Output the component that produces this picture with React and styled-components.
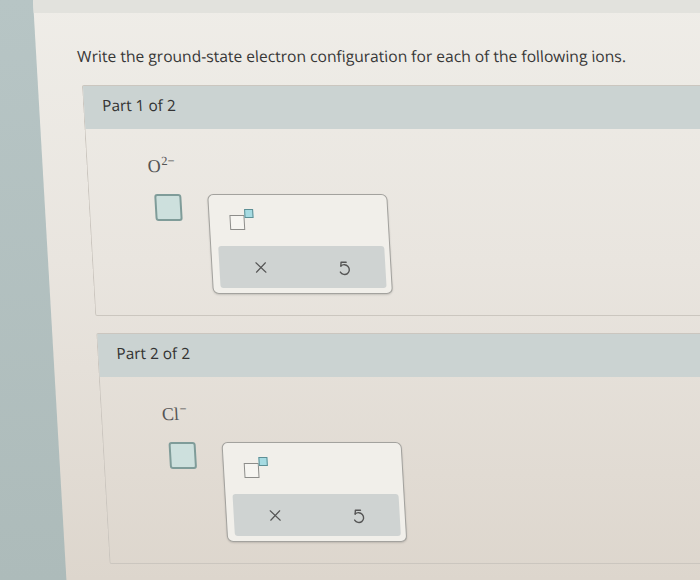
import React from "react";
import styled, { createGlobalStyle } from "styled-components";
import { X } from "lucide-react";

const GlobalStyle = createGlobalStyle`
  html, body {
    margin: 0;
    padding: 0;
  }
  body {
    background: #b2c0c0;
    overflow: hidden;
    font-family: "Open Sans", "Noto Sans", sans-serif;
  }
`;

// wall + monitor, the photo is taken at a slight angle
const Scene = styled.div`
  width: 700px;
  height: 580px;
  overflow: hidden;
  background: linear-gradient(180deg, #b7c5c5 0%, #adbbba 100%);
`;

const Screen = styled.div`
  margin-left: 33px;
  width: 720px;
  height: 580px;
  transform: skewX(3.3deg);
  transform-origin: 0 0;
  background: linear-gradient(180deg, #efede8 0%, #e9e5df 45%, #ddd6cd 100%);
  display: flex;
  flex-direction: column;
`;

const TopBar = styled.div`
  height: 13px;
  flex-shrink: 0;
  background: #e2e2dd;
`;

const Content = styled.div`
  padding: 33px 0 0 41px;
  display: flex;
  flex-direction: column;
`;

const Heading = styled.h1`
  margin: 0 0 18px;
  font-size: 15.6px;
  line-height: 21px;
  font-weight: 400;
  color: #383838;
`;

// =====================================
// question parts

const Card = styled.section`
  margin: 0 0 17px 3px;
  border: 1px solid #cbc6bf;
  border-right: none;
  border-radius: 2px;
`;

const CardHeader = styled.div`
  height: 43px;
  box-sizing: border-box;
  padding: 0 0 4px 18px;
  display: flex;
  align-items: center;
  background: #cbd3d2;
  font-size: 15.4px;
  color: #333;
`;

const CardBody = styled.div`
  padding: 27px 0 21px 60px;
`;

const Species = styled.div`
  font-family: "Liberation Serif", "Times New Roman", serif;
  font-size: 18px;
  line-height: 20px;
  color: #555;
`;

const Sup = styled.sup`
  font-size: 12.5px;
  vertical-align: 0;
  position: relative;
  top: -7px;
  margin-left: 1px;
`;

const Row = styled.div`
  margin-top: 16px;
  padding-left: 5px;
  display: flex;
  align-items: flex-start;
  gap: 26px;
`;

const AnswerBox = styled.div`
  width: 27px;
  height: 27px;
  box-sizing: border-box;
  border: 2px solid #7f9c99;
  border-radius: 3px;
  background: #cde0dd;
`;

const ToolBox = styled.div`
  width: 180px;
  height: 100px;
  box-sizing: border-box;
  padding: 0 5px 5px 7px;
  display: flex;
  flex-direction: column;
  border: 1.5px solid #a3a29e;
  border-radius: 6px;
  background: #f1efea;
  box-shadow: 0 1px 2px rgba(0, 0, 0, 0.15);
`;

const Templates = styled.div`
  flex: 1;
  display: flex;
  align-items: center;
  padding: 0 0 2px 13px;
`;

const SuperIcon = styled.div`
  display: flex;
  align-items: flex-start;
  height: 21px;
`;

const BaseSquare = styled.span`
  width: 15px;
  height: 15px;
  margin-top: 6px;
  box-sizing: border-box;
  border: 1.5px solid #8d8d8a;
  background: #f6f5f1;
`;

const ExpSquare = styled.span`
  width: 9px;
  height: 9px;
  box-sizing: border-box;
  border: 1.2px solid #5d8f95;
  background: #a6dbe2;
`;

const ActionBar = styled.div`
  height: 42px;
  display: grid;
  grid-template-columns: 1fr 1fr;
  place-items: center;
  border-radius: 3px;
  background: #cfd3d2;
  color: #555;
`;

const UndoIcon = () => (
  <svg width="17" height="17" viewBox="0 0 16 16" fill="none" stroke="currentColor" strokeWidth="1.3" strokeLinecap="round" strokeLinejoin="round">
    <path d="M5.2 6.6 A4.6 4.6 0 1 1 4.4 12.3" />
    <path d="M5.2 6.6 L5.6 3 H10.4" />
  </svg>
);

const Part = ({ title, children }) => (
  <Card>
    <CardHeader>{title}</CardHeader>
    <CardBody>
      <Species>{children}</Species>
      <Row>
        <AnswerBox />
        <ToolBox>
          <Templates>
            <SuperIcon>
              <BaseSquare />
              <ExpSquare />
            </SuperIcon>
          </Templates>
          <ActionBar>
            <X size={19} strokeWidth={1.4} />
            <UndoIcon />
          </ActionBar>
        </ToolBox>
      </Row>
    </CardBody>
  </Card>
);

const App = () => {
  return (
    <Scene>
      <GlobalStyle />
      <Screen>
        <TopBar />
        <Content>
          <Heading>
            Write the ground-state electron configuration for each of the following ions.
          </Heading>
          <Part title="Part 1 of 2">
            O<Sup>2−</Sup>
          </Part>
          <Part title="Part 2 of 2">
            Cl<Sup>−</Sup>
          </Part>
        </Content>
      </Screen>
    </Scene>
  );
};

export default App;
